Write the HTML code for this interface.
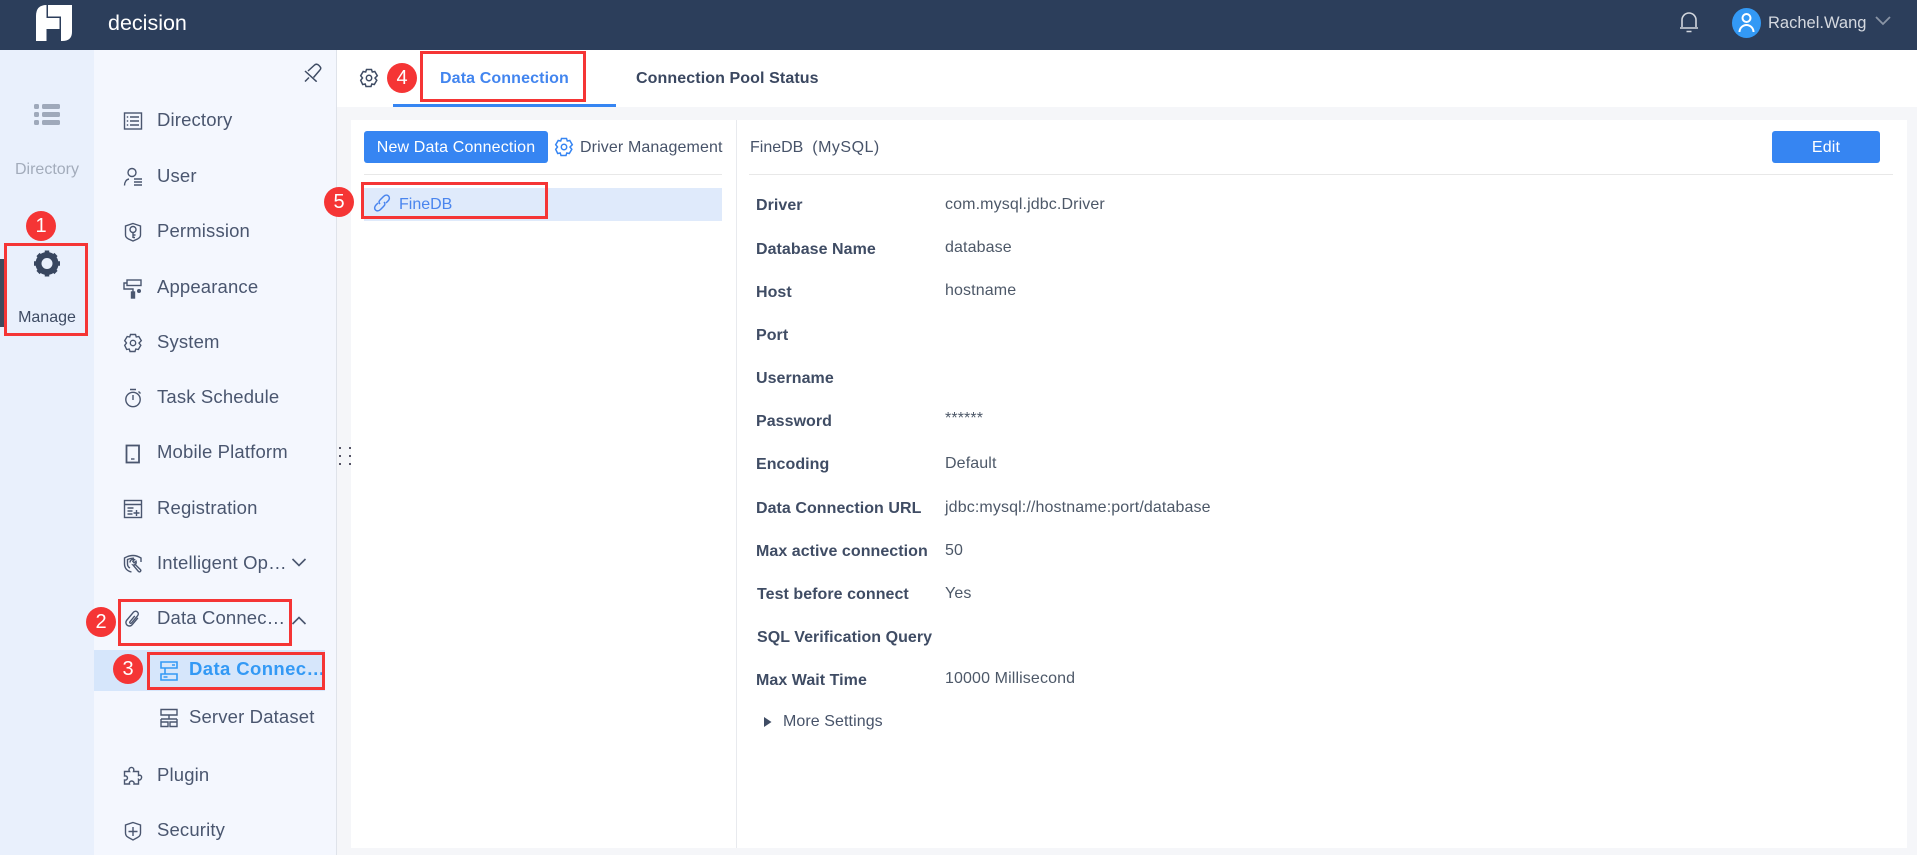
<!DOCTYPE html>
<html><head><meta charset="utf-8"><title>decision</title>
<style>
html,body{margin:0;padding:0;width:1917px;height:855px;overflow:hidden;background:#f5f6f9;font-family:"Liberation Sans",Arial,sans-serif}
#w{position:absolute;left:0;top:0;width:1917px;height:855px;overflow:hidden;filter:blur(.35px)}
.a{position:absolute}
.t{position:absolute;white-space:nowrap;line-height:24px;height:24px;font-size:16px;color:#475369}
.n{font-size:18.5px;left:157px;color:#4a566f;letter-spacing:.15px}
.l{font-weight:bold;left:756px;color:#3f4c64;letter-spacing:.05px}
.v{left:945px;color:#4d5868;letter-spacing:.12px}
.r{position:absolute;border:3px solid #f53535;box-sizing:border-box}
.c{position:absolute;width:30px;height:30px;border-radius:50%;background:#f53535;color:#fff;text-align:center;line-height:30px;font-size:20px}
.i{position:absolute;fill:none;stroke:#4a566f;stroke-width:1.4}
.b{position:absolute;background:#3685f2;border-radius:3px;color:#fff;text-align:center;font-size:16px;line-height:33px;height:32px;top:131px;letter-spacing:.15px}
</style></head><body><div id="w">
<div class="a" style="left:0;top:0;width:1917px;height:50px;background:#2c3e5b"></div>
<svg class="a" style="left:36px;top:5px" width="36" height="36" viewBox="0 0 36 36"><path d="M12 0H36V27Q36 36 26 36H25V11.500H12V0ZM0 11Q0 0 10.500 0V13H23.500V24H10.500V36H0Z" fill="#fff"/></svg>
<div class="t" style="left:108px;top:11px;font-size:21.5px;color:#fff">decision</div>
<svg class="i" style="left:1678px;top:11px;stroke:#d3d7de;stroke-width:1.6" width="22" height="22" viewBox="0 0 22 22"><path d="M4 16V9a7 7 0 0 1 14 0v7M2 17h18M8.500 20.500h5"/></svg>
<div class="a" style="left:1732px;top:8px;width:29px;height:30px;border-radius:50%;background:#3399f5"></div>
<svg class="i" style="left:1736px;top:12px;stroke:#fff;stroke-width:2" width="21" height="22" viewBox="0 0 21 22"><circle cx="10.500" cy="6" r="4"/><path d="M3.500 20a7 7 0 0 1 14 0"/></svg>
<div class="t" style="left:1768px;top:11px;font-size:16.500px;color:#d5d9e0">Rachel.Wang</div>
<svg class="i" style="left:1874px;top:15px;stroke:#8b95a6;stroke-width:1.800" width="18" height="12" viewBox="0 0 18 12"><path d="M2 2l7 7 7-7"/></svg>

<div class="a" style="left:0;top:50px;width:94px;height:805px;background:#e9f0fc"></div>
<div class="a" style="left:94px;top:50px;width:242px;height:805px;background:#f4f7fe"></div>
<div class="a" style="left:336px;top:50px;width:1px;height:805px;background:#dfe3ea"></div>
<div class="a" style="left:337px;top:50px;width:1580px;height:57px;background:#fff"></div>
<div class="a" style="left:351px;top:120px;width:1556px;height:728px;background:#fff"></div>
<div class="a" style="left:736px;top:120px;width:1px;height:728px;background:#e8eaee"></div>

<svg class="a" style="left:34px;top:104px" width="27" height="22" viewBox="0 0 27 22" fill="#9fa9ba"><rect x="0" y="0" width="5" height="5" rx="1.500"/><rect x="8" y="0" width="18" height="5" rx="1.500"/><rect x="0" y="8" width="5" height="5" rx="1.500"/><rect x="8" y="8" width="18" height="5" rx="1.500"/><rect x="0" y="16" width="5" height="5" rx="1.500"/><rect x="8" y="16" width="18" height="5" rx="1.500"/></svg>
<div class="t" style="left:0;width:94px;text-align:center;top:158px;color:#a3acbb">Directory</div>
<div class="a" style="left:0;top:259px;width:4px;height:68px;background:#3f4a5c"></div>
<svg class="a" style="left:32px;top:248px" width="30" height="30" viewBox="0 0 30 30"><circle cx="15" cy="15.500" r="8.500" fill="none" stroke="#38465f" stroke-width="6"/><g stroke="#38465f" stroke-width="4.500"><path d="M15 2.500v4M15 24.500v4M2 15.500h4M24 15.500h4M6 6.500l3 3M21 21.500l3 3M24 6.500l-3 3M9 21.500l-3 3"/></g></svg>
<div class="t" style="left:0;width:94px;text-align:center;top:306px;color:#3e4b63">Manage</div>

<svg class="i" style="left:303px;top:62px;stroke:#3f4c64;stroke-width:1.500" width="20" height="20" viewBox="0 0 20 20"><path d="M2 9L13.700 19.700M5 9L11 3.500C13 1.500 14.500 2 16 3.500 18 5.500 18.500 6.500 16.500 8.500L10.500 15.500M6 15.500L2 19.500"/></svg>

<svg class="i" style="left:123px;top:111px" width="20" height="20" viewBox="0 0 20 20"><rect x="1.500" y="2" width="17" height="16"/><path d="M7 6h9M7 10h9M7 14h9M3.800 6h1.400M3.800 10h1.400M3.800 14h1.400"/></svg>
<div class="t n" style="top:108px">Directory</div>
<svg class="i" style="left:123px;top:167px" width="20" height="20" viewBox="0 0 20 20"><circle cx="9" cy="5.500" r="4"/><path d="M1.500 18.500c0-3 1.500-6 4.500-6.500M11 12h8M11 15h8M11 18h8"/></svg>
<div class="t n" style="top:164px">User</div>
<svg class="i" style="left:123px;top:222px" width="20" height="20" viewBox="0 0 20 20"><path d="M10 1.500l7.500 2.500v9c0 2-1 3-3 4l-4.500 2-4.500-2c-2-1-3-2-3-4V4z"/><circle cx="10" cy="7.500" r="3"/><path d="M10 10.500V16M10 13h2.500M10 15.500h2"/></svg>
<div class="t n" style="top:219px">Permission</div>
<svg class="i" style="left:123px;top:279px" width="20" height="20" viewBox="0 0 20 20"><rect x="4" y="1" width="14" height="5.500"/><path d="M4 4H1v6h9v3"/><rect x="8.500" y="13" width="3" height="6" fill="#4a566f"/><circle cx="16" cy="12" r="2" fill="#4a566f" stroke="none"/></svg>
<div class="t n" style="top:275px">Appearance</div>
<svg class="i" style="left:123px;top:333px" width="20" height="20" viewBox="0 0 20 20"><path d="M7.500 1.500h5l.800 2.500 2.500-.5 2.500 4.200L16 10l1.800 2.300-2.500 4.200-2.500-.5-.800 2.500h-5l-.800-2.500-2.500.5L1.700 12.300 3.500 10 1.700 7.700 4.200 3.500l2.500.5z"/><circle cx="10" cy="10" r="2.700"/></svg>
<div class="t n" style="top:330px">System</div>
<svg class="i" style="left:123px;top:388px" width="20" height="20" viewBox="0 0 20 20"><circle cx="10" cy="11.500" r="7.200"/><path d="M10 7v5M7 1.500h6M15.500 3.500l2 2"/></svg>
<div class="t n" style="top:385px">Task Schedule</div>
<svg class="i" style="left:123px;top:444px" width="20" height="20" viewBox="0 0 20 20"><rect x="3.500" y="1.500" width="12.500" height="17" stroke-width="1.800"/><path d="M8 15h3.500"/></svg>
<div class="t n" style="top:440px">Mobile Platform</div>
<svg class="i" style="left:123px;top:499px" width="20" height="20" viewBox="0 0 20 20"><rect x="1.500" y="1.500" width="17" height="17"/><path d="M1.500 5.500h17M4.500 9h6M4.500 12h5M4.500 15h5M13.500 11v6M10.500 14h6"/></svg>
<div class="t n" style="top:496px">Registration</div>
<svg class="i" style="left:123px;top:554px" width="20" height="20" viewBox="0 0 20 20"><path d="M8.500 18C4 17 1.500 14 1.500 10V4C4 2.500 7 1.500 10 1.500 13 1.500 15.500 2.500 18 4V8"/><path d="M7 14C5 13 4.500 11.500 4.500 10V5.500C7 4.500 9 4 11 4.300"/><path d="M7 8.500C7 6 9 4.800 11.500 5.500L9.800 7.300 11 8.800 13 7.200C13.800 9.500 12 11.500 10 11L15.500 17.500C16.500 18.800 18.500 17 17.500 15.700L11.500 9.800"/></svg>
<div class="t n" style="top:551px">Intelligent Op…</div>
<svg class="i" style="left:291px;top:557px;stroke-width:1.600" width="16" height="11" viewBox="0 0 16 11"><path d="M1.500 2l6.500 6.500L14.500 2"/></svg>
<svg class="i" style="left:123px;top:609px" width="20" height="20" viewBox="0 0 20 20"><g transform="rotate(40 10 10)"><path d="M13 6v9a3.500 3.500 0 0 1-7 0V4.500a2.700 2.700 0 0 1 5.400 0V14a1 1 0 0 1-2 0V6.500"/></g></svg>
<div class="t n" style="top:606px">Data Connec…</div>
<svg class="i" style="left:291px;top:615px;stroke-width:1.600" width="16" height="11" viewBox="0 0 16 11"><path d="M1.500 9L8 2.500 14.500 9"/></svg>

<div class="a" style="left:94px;top:650px;width:231px;height:41px;background:#d6e6fb"></div>
<svg class="i" style="left:159px;top:661px;stroke:#3399f5;stroke-width:1.600" width="20" height="20" viewBox="0 0 20 20"><path d="M2 1h16v6H2zM6 7h8M2 13h16v6H2zM6 13V7M4.500 16h4M13 4h3"/></svg>
<div class="t n" style="left:189px;top:657px;color:#3399f5;font-weight:bold;letter-spacing:.4px">Data Connec…</div>
<svg class="i" style="left:159px;top:708px" width="20" height="20" viewBox="0 0 20 20"><path d="M2 1.500h16v5.500H2zM10 7v4M2 11h16M2 11v7.500h7V14H2M11 14h7v4.500h-7zM18 11v3"/></svg>
<div class="t n" style="left:189px;top:705px">Server Dataset</div>
<svg class="i" style="left:123px;top:766px" width="20" height="20" viewBox="0 0 20 20"><path d="M1.500 5.500h5c-1-1.500-.5-3.500 1.500-4 2-.5 3.500 1.500 2.500 4h5v4c2-1 3.500.5 3 2.500-.5 2-2 2.500-3 1.500v4.500H11c.5-2-1-3-2.500-3s-2.500 1.500-2 3H1.500V14c2 .5 3-1 3-2s-1-2.500-3-2z"/></svg>
<div class="t n" style="top:763px">Plugin</div>
<svg class="i" style="left:123px;top:821px" width="20" height="20" viewBox="0 0 20 20"><path d="M10 1.500l7.500 2.500v8c0 2.500-1 3.500-3 4.500l-4.500 2.500-4.500-2.500c-2-1-3-2-3-4.500V4zM10 6v9M5.500 10.500h9"/></svg>
<div class="t n" style="top:818px">Security</div>

<div class="a" style="left:339px;top:447px;width:2px;height:2px;box-shadow:0 8px #556,0 16px #556,10px 0 #556,10px 8px #556,10px 16px #556;background:#556"></div>

<svg class="i" style="left:359px;top:68px;stroke:#3f4c64;stroke-width:1.500" width="20" height="20" viewBox="0 0 20 20"><path d="M7.500 1.500h5l.800 2.500 2.500-.5 2.500 4.200L16 10l1.800 2.300-2.500 4.200-2.500-.5-.800 2.500h-5l-.800-2.500-2.500.5L1.700 12.300 3.500 10 1.700 7.700 4.200 3.500l2.500.5z"/><circle cx="10" cy="10" r="2.700"/></svg>
<div class="t" style="left:440px;top:67px;font-weight:bold;color:#4285ef;letter-spacing:.12px">Data Connection</div>
<div class="t" style="left:636px;top:67px;font-weight:bold;color:#3a4760;letter-spacing:.1px">Connection Pool Status</div>
<div class="a" style="left:393px;top:104px;width:223px;height:3px;background:#3685f2"></div>

<div class="b" style="left:364px;width:184px">New Data Connection</div>
<svg class="i" style="left:554px;top:137px;stroke:#3685f2;stroke-width:1.500" width="20" height="20" viewBox="0 0 20 20"><path d="M7.500 1.500h5l.800 2.500 2.500-.5 2.500 4.200L16 10l1.800 2.300-2.500 4.200-2.500-.5-.800 2.500h-5l-.800-2.500-2.500.5L1.700 12.300 3.500 10 1.700 7.700 4.200 3.500l2.500.5z"/><circle cx="10" cy="10" r="2.700"/></svg>
<div class="t" style="left:580px;top:136px;letter-spacing:.12px">Driver Management</div>
<div class="a" style="left:364px;top:174px;width:358px;height:1px;background:#e8e8e8"></div>
<div class="a" style="left:364px;top:188px;width:358px;height:33px;background:#dfeafb"></div>
<svg class="i" style="left:372px;top:193px;stroke:#4a85ee;stroke-width:1.500" width="20" height="20" viewBox="0 0 20 20"><path d="M8 11c-2-2-.5-3.500.5-4.500l3-3c2-2 4-1.500 5-.5s1.500 3-.5 5L14 10M12 9c2 2 .5 3.500-.5 4.500l-3 3c-2 2-4 1.500-5 .5s-1.500-3 .5-5L6 10"/></svg>
<div class="t" style="left:399px;top:193px;color:#4a85ee">FineDB</div>

<div class="t" style="left:750px;top:136px;white-space:pre">FineDB&nbsp;&nbsp;<span style="letter-spacing:.5px">(MySQL)</span></div>
<div class="a" style="left:749px;top:174px;width:1144px;height:1px;background:#e8e8e8"></div>
<div class="b" style="left:1772px;width:108px">Edit</div>

<div class="t l" style="top:194px">Driver</div><div class="t v" style="top:193px">com.mysql.jdbc.Driver</div>
<div class="t l" style="top:238px">Database Name</div><div class="t v" style="top:236px">database</div>
<div class="t l" style="top:281px">Host</div><div class="t v" style="top:279px">hostname</div>
<div class="t l" style="top:324px">Port</div>
<div class="t l" style="top:367px">Username</div>
<div class="t l" style="top:410px">Password</div><div class="t v" style="top:407px">******</div>
<div class="t l" style="top:453px">Encoding</div><div class="t v" style="top:452px">Default</div>
<div class="t l" style="top:497px">Data Connection URL</div><div class="t v" style="top:496px">jdbc:mysql://hostname:port/database</div>
<div class="t l" style="top:540px">Max active connection</div><div class="t v" style="top:539px">50</div>
<div class="t l" style="top:583px;left:757px">Test before connect</div><div class="t v" style="top:582px">Yes</div>
<div class="t l" style="top:626px;left:757px">SQL Verification Query</div>
<div class="t l" style="top:669px">Max Wait Time</div><div class="t v" style="top:667px">10000 Millisecond</div>
<svg class="a" style="left:764px;top:717px" width="8" height="10" viewBox="0 0 8 10"><path d="M0 0l7.500 5L0 10z" fill="#3f4c64"/></svg>
<div class="t" style="left:783px;top:710px;letter-spacing:.08px">More Settings</div>

<div class="r" style="left:4px;top:243px;width:84px;height:93px"></div>
<div class="r" style="left:118px;top:599px;width:174px;height:47px"></div>
<div class="r" style="left:147px;top:652px;width:178px;height:38px"></div>
<div class="r" style="left:420px;top:51px;width:166px;height:51px"></div>
<div class="r" style="left:361px;top:182px;width:187px;height:37px"></div>
<div class="c" style="left:26px;top:211px">1</div>
<div class="c" style="left:86px;top:607px">2</div>
<div class="c" style="left:113px;top:654px">3</div>
<div class="c" style="left:387px;top:63px">4</div>
<div class="c" style="left:324px;top:187px">5</div>
</div></body></html>
